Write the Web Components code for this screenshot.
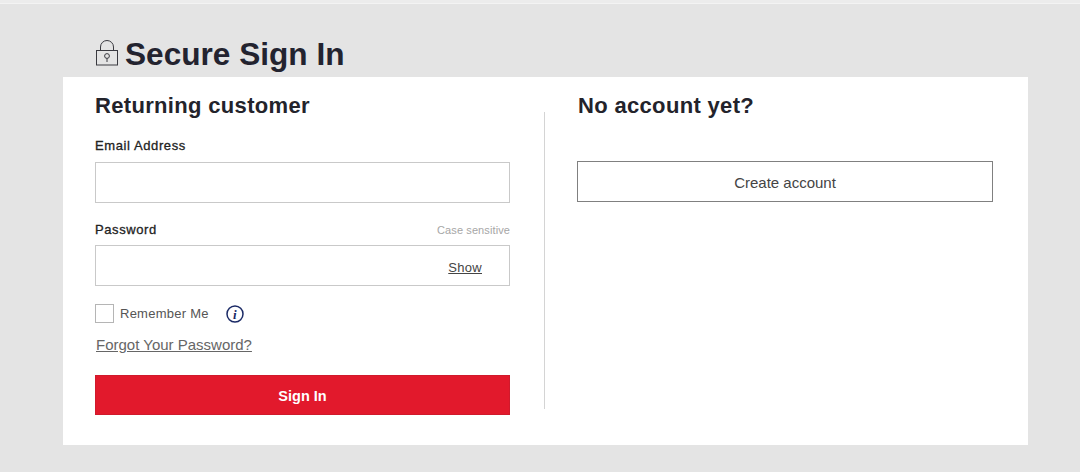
<!DOCTYPE html>
<html lang="en">
<head>
<meta charset="utf-8">
<title>Secure Sign In</title>
<style>
  html, body { margin: 0; height: 100%; }
  body { font-family: 'Liberation Sans', Arial, sans-serif; background: #e4e4e4; overflow: hidden; }
</style>
</head>
<body>
<signin-page>
  <signin-title slot="title">Secure Sign In</signin-title>
  <signin-panel slot="left" heading="Returning customer">
    <form-field label="Email Address"></form-field>
    <form-field label="Password" hint="Case sensitive" action="Show"></form-field>
    <remember-row></remember-row>
    <forgot-link>Forgot Your Password?</forgot-link>
    <primary-button>Sign In</primary-button>
  </signin-panel>
  <signin-panel slot="right" heading="No account yet?">
    <secondary-button>Create account</secondary-button>
  </signin-panel>
</signin-page>

<script>
class SigninPage extends HTMLElement {
  constructor() {
    super();
    this.attachShadow({ mode: 'open' });
    this.shadowRoot.innerHTML = `
      <style>
        :host { display: flex; flex-direction: column; height: 472px; box-sizing: border-box; border-top: 3px solid #ececec; box-shadow: inset 0 1px 0 #f3f3f3; padding: 0 52px 27px 63px; }
        .card { flex: 1; background: #fff; display: grid; grid-template-columns: 450px 1fr; padding: 0 35px 0 32px; }
        .left { padding-right: 35px; position: relative; }
        .left::after { content: ''; position: absolute; right: 0; top: 35px; bottom: 36px; width: 1px; background: #d4d4d4; }
        .right { padding-left: 32px; }
      </style>
      <slot name="title"></slot>
      <div class="card">
        <div class="left"><slot name="left"></slot></div>
        <div class="right"><slot name="right"></slot></div>
      </div>`;
  }
}

class SigninTitle extends HTMLElement {
  constructor() {
    super();
    this.attachShadow({ mode: 'open' });
    this.shadowRoot.innerHTML = `
      <style>
        :host { display: flex; align-items: center; gap: 7px; height: 74px; padding: 0 0 0 33px; box-sizing: border-box; color: #23232f; }
        svg { width: 22px; height: 26px; flex: none; margin-top: 26px; }
        h1 { margin: 28px 0 0; font-size: 31.6px; line-height: 48px; font-weight: 700; }
      </style>
      <svg viewBox="0 0 22 26" fill="none" stroke="#3a3a40" stroke-width="1">
        <rect x=".5" y="10.5" width="21" height="14.5"/>
        <path d="M4.5 10.5V7a6.5 6.5 0 0 1 13 0v3.5"/>
        <circle cx="11" cy="16" r="2.4"/>
        <path d="M11 18.4v3.6"/>
      </svg>
      <h1><slot></slot></h1>`;
  }
}

class SigninPanel extends HTMLElement {
  constructor() {
    super();
    this.attachShadow({ mode: 'open' });
    this.shadowRoot.innerHTML = `
      <style>
        :host { display: flex; flex-direction: column; color: #222; }
        :host([slot="right"]) h2 { padding-left: 1px; }
        h2 { margin: 16px 0 0; font-size: 22px; line-height: 26px; font-weight: 700; letter-spacing: .33px; color: #23232b; }
      </style>
      <h2></h2>
      <slot></slot>`;
    this.shadowRoot.querySelector('h2').textContent = this.getAttribute('heading');
  }
}

class FormField extends HTMLElement {
  constructor() {
    super();
    this.attachShadow({ mode: 'open' });
    this.shadowRoot.innerHTML = `
      <style>
        :host { display: block; padding-top: 13px; }
        .top { display: flex; justify-content: space-between; align-items: center; height: 26px; }
        label { font-size: 13px; color: #222; -webkit-text-stroke: .3px #222; letter-spacing: .6px; }
        .hint { font-size: 11px; color: #a6a6a6; letter-spacing: .1px; margin-top: 2px; }
        .box { height: 41px; box-sizing: border-box; border: 1px solid #c9c9c9; margin-top: 4px; display: flex; align-items: center; justify-content: flex-end; padding-right: 27px; }
        :host([hint]) .box { margin-top: 3px; }
        .action { font-size: 13px; color: #444; letter-spacing: .3px; text-decoration: underline; margin-top: 3px; }
      </style>
      <div class="top"><label></label><span class="hint"></span></div>
      <div class="box"><span class="action"></span></div>`;
    this.shadowRoot.querySelector('label').textContent = this.getAttribute('label');
    this.shadowRoot.querySelector('.hint').textContent = this.getAttribute('hint') || '';
    this.shadowRoot.querySelector('.action').textContent = this.getAttribute('action') || '';
  }
}

class RememberRow extends HTMLElement {
  constructor() {
    super();
    this.attachShadow({ mode: 'open' });
    this.shadowRoot.innerHTML = `
      <style>
        :host { display: flex; align-items: center; margin-top: 18px; height: 19px; font-size: 13px; color: #555; letter-spacing: .25px; }
        .check { width: 19px; height: 19px; box-sizing: border-box; border: 1px solid #b5b5b5; margin-right: 6px; }
        svg { width: 18px; height: 18px; margin-left: 17px; }
      </style>
      <span class="check"></span>
      <span>Remember Me</span>
      <svg viewBox="0 0 18 18" fill="none">
        <circle cx="9" cy="9" r="8" stroke="#1b2a66" stroke-width="1.5"/>
        <text x="9" y="13.5" text-anchor="middle" font-family="'Liberation Serif', serif" font-style="italic" font-weight="700" font-size="13" fill="#1b2a66">i</text>
      </svg>`;
  }
}

class ForgotLink extends HTMLElement {
  constructor() {
    super();
    this.attachShadow({ mode: 'open' });
    this.shadowRoot.innerHTML = `
      <style>
        :host { display: block; margin-top: 12px; padding-left: 1px; font-size: 15px; line-height: 20px; color: #666; text-decoration: underline; }
      </style>
      <slot></slot>`;
  }
}

class PrimaryButton extends HTMLElement {
  constructor() {
    super();
    this.attachShadow({ mode: 'open' });
    this.shadowRoot.innerHTML = `
      <style>
        :host { display: flex; align-items: center; justify-content: center; height: 40px; box-sizing: border-box; padding-top: 1px; margin-top: 20px; background: #e2192c; box-shadow: inset 0 0 0 1px #d01a2c; color: #fff; font-size: 14.5px; font-weight: 700; }
      </style>
      <slot></slot>`;
  }
}

class SecondaryButton extends HTMLElement {
  constructor() {
    super();
    this.attachShadow({ mode: 'open' });
    this.shadowRoot.innerHTML = `
      <style>
        :host { display: flex; align-items: center; justify-content: center; height: 41px; box-sizing: border-box; padding-top: 1px; margin-top: 42px; border: 1px solid #808080; color: #444; font-size: 15px; }
      </style>
      <slot></slot>`;
  }
}

customElements.define('signin-page', SigninPage);
customElements.define('signin-title', SigninTitle);
customElements.define('signin-panel', SigninPanel);
customElements.define('form-field', FormField);
customElements.define('remember-row', RememberRow);
customElements.define('forgot-link', ForgotLink);
customElements.define('primary-button', PrimaryButton);
customElements.define('secondary-button', SecondaryButton);
</script>
</body>
</html>
